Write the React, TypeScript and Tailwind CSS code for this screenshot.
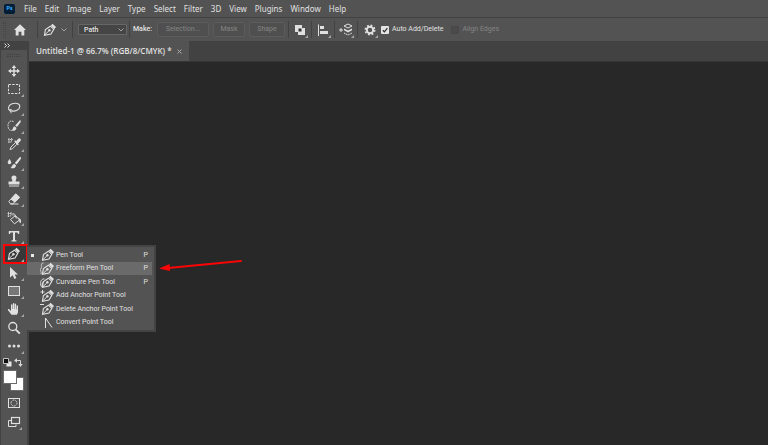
import React, { useState } from 'react';

type IconProps = { className?: string };

const menus = ['File', 'Edit', 'Image', 'Layer', 'Type', 'Select', 'Filter', '3D', 'View', 'Plugins', 'Window', 'Help'];

const Svg = ({ children, className = 'w-4 h-4' }: { children: React.ReactNode; className?: string }) => (
  <svg viewBox="0 0 16 16" fill="none" stroke="currentColor" strokeWidth="1" className={`shrink-0 ${className}`} aria-hidden="true">
    {children}
  </svg>
);

const nib = (
  <>
    <path d="M2.5 13.2 3.4 7.6 8.4 4.2 11.8 7.4 9 12Z" strokeWidth="1.1" />
    <path d="M2.7 13 6.6 9.1" />
    <circle cx="7.4" cy="8.3" r="1.2" fill="currentColor" stroke="none" />
    <path d="M8.8 3.4 10.6 1.8 14 5.1 12.4 7Z" fill="currentColor" stroke="none" />
  </>
);

const PenIcon = ({ className }: IconProps) => <Svg className={className}>{nib}</Svg>;

const FreeformIcon = () => (
  <Svg>
    {nib}
    <path d="M3.5 2C1 2 1.500 4 1.500 5.500S0 8 .5 9.500s1.200 2 .3 3.500" strokeWidth=".8" />
  </Svg>
);

const CurvatureIcon = () => (
  <Svg>
    {nib}
    <path d="M4.5 5C1.8 4.5.5 7 .6 9.5S1.5 13 2.5 13.2M3.5 7.5C2 8.5 2 11 2.6 13" />
  </Svg>
);

const AddPointIcon = () => (
  <Svg>
    {nib}
    <path d="M2.5 2v4M.5 4h4" />
  </Svg>
);

const DeletePointIcon = () => (
  <Svg>
    {nib}
    <path d="M0 3.5h4" />
  </Svg>
);

const ConvertIcon = () => (
  <Svg>
    <path d="M5.5 13V3L12 12.5" />
  </Svg>
);

const MoveIcon = () => (
  <Svg>
    <path d="M8 4v8M4 8h8" strokeWidth="1.4" />
    <path d="M8 2 10.3 5H5.7ZM8 14l2.3-3H5.7ZM2 8l3-2.3v4.6ZM14 8l-3-2.3v4.6Z" fill="currentColor" stroke="none" />
  </Svg>
);

const MarqueeIcon = () => (
  <Svg>
    <rect x="2.5" y="3.5" width="11" height="9" strokeDasharray="2.4 1.3" />
  </Svg>
);

const LassoIcon = () => (
  <Svg>
    <path d="M4.3 10.8C1.5 9.5 2 5.5 5.5 4 9.5 2.3 14 3.5 13.8 6.6 13.5 10 9.5 11.7 5.5 11" strokeWidth="1.1" />
    <path d="M4.2 9.5c1.5-.5 2.4 1 1.2 1.8s-2.500-.8-1.200-1.800c-.3 1.500 1.300 2.200.8 3.800" />
  </Svg>
);

const QuickSelectIcon = () => (
  <Svg>
    <path d="M7.5 3.5C4 1.800 1.800 4.500 2 8s2 4.800 4 4.300" strokeDasharray="1.6 .9" />
    <path d="M14.500 2.500c.6.500.3 1.300-.5 2.400l-3 4-1.800-1.500 3.600-4c.7-.8 1.200-1.300 1.700-.9ZM8.500 8.300l2 1.700c-.2 2.200-2.200 3-5 2.800 1.500-1 1-3.500 3-4.500Z" fill="currentColor" stroke="none" />
  </Svg>
);

const EyedropperIcon = () => (
  <Svg>
    <path d="M2 3.5h5M2 6h4M3 2v5M5.5 2v4" strokeWidth=".8" strokeDasharray="1.5 .5" />
    <path d="m4 13.500.8-2.300L9.500 6.500l1.600 1.600-4.700 4.700Z" />
    <path d="m8.200 5.300 1-1 1 .9 1.800-2.200c.8-.9 2-.8 2.600 0 .5.8.3 1.700-.5 2.400L12 7.200l.9 1-1 1Z" fill="currentColor" stroke="none" />
  </Svg>
);

const BrushIcon = () => (
  <Svg>
    <path d="M14.800 2.300c.6.500.3 1.300-.4 2.300L10.600 9.500 8.800 8l4.200-5c.7-.8 1.200-1.100 1.800-.7ZM8.200 8.800l1.900 1.600c-.4 2.500-2.700 3.200-5.600 2.600 1.700-.8 1.400-3.400 3.700-4.200ZM3.500 4c1 1.700 1.800 2.400 1.800 3.500a1.800 1.800 0 0 1-3.600 0C1.700 6.400 2.500 5.700 3.500 4Z" fill="currentColor" stroke="none" />
  </Svg>
);

const StampIcon = () => (
  <Svg>
    <path d="M8 2.500c2 0 3 1.500 2.400 3C9.800 6.800 9.600 7.500 9.800 8.500h3.700v3h-11v-3h3.700c.2-1 0-1.700-.6-3C5 4 6 2.500 8 2.500ZM3 12.500h10v1H3Z" fill="currentColor" stroke="none" />
  </Svg>
);

const EraserIcon = () => (
  <Svg>
    <path d="M2.8 10.5 5 8l3.500 3-1.500 1.800H4.500Z" />
    <path d="m5.3 7.5 4.400-4.700 4 3.500-4.500 4.700Z" fill="currentColor" />
    <path d="M4.500 13h8" />
  </Svg>
);

const BucketIcon = () => (
  <Svg>
    <path d="M1.5 3.5h5M1.5 6h4M2.5 2v5M5 2v4" strokeWidth=".8" strokeDasharray="1.5 .5" />
    <path d="M4.5 9.5 9.5 5.5l4 4.500-5 3.800ZM7 5.500c-.5-2 1-2.500 1.700-1l1.700 4" />
    <path d="m12 7.300 2.500 2c.8 1.500.8 3-.1 4-1-.8-1.200-2-1.200-3.300Z" fill="currentColor" stroke="none" />
  </Svg>
);

const TypeIcon = () => (
  <Svg>
    <path d="M2.800 3h10.400v3h-1.200c-.1-1-.5-1.500-1.500-1.500H9v7c0 .6.300.8 1.500.9V13.400h-5v-1c1.200-.1 1.500-.3 1.500-.9v-7H5.500C4.500 4.500 4.100 5 4 6H2.800Z" fill="currentColor" stroke="none" />
  </Svg>
);

const SelectionIcon = () => (
  <Svg>
    <path d="M4 2v10.500l2.700-2.300 1.700 3.800 2-.9-1.700-3.700H12Z" fill="currentColor" stroke="none" />
  </Svg>
);

const RectangleIcon = () => (
  <Svg>
    <rect x="2.5" y="3.5" width="11" height="9" fill="#777777" />
  </Svg>
);

const HandIcon = () => (
  <Svg>
    <path d="M5.500 13.800 2 9.200c-.5-.9.5-1.600 1.300-.9L5 10V4c0-1 1.400-1 1.400 0v4h.4V2.800c0-1 1.500-1 1.500 0V8h.4V3.200c0-1 1.400-1 1.400 0v5h.5V5c0-1 1.400-1 1.400 0v5c0 1.800-.5 2.700-1.200 3.800Z" fill="currentColor" stroke="none" />
  </Svg>
);

const ZoomIcon = () => (
  <Svg>
    <circle cx="6.8" cy="6.5" r="4" strokeWidth="1.3" />
    <path d="m9.800 9.600 4 4" strokeWidth="1.9" />
  </Svg>
);

const MoreIcon = () => (
  <Svg>
    <g fill="currentColor" stroke="none">
      <circle cx="3.5" cy="8" r="1.5" />
      <circle cx="8" cy="8" r="1.5" />
      <circle cx="12.5" cy="8" r="1.5" />
    </g>
  </Svg>
);

const tools = [
  { name: 'Move Tool', Icon: MoveIcon, corner: false },
  { name: 'Rectangular Marquee Tool', Icon: MarqueeIcon, corner: true },
  { name: 'Lasso Tool', Icon: LassoIcon, corner: true },
  { name: 'Quick Selection Tool', Icon: QuickSelectIcon, corner: true },
  { name: 'Eyedropper Tool', Icon: EyedropperIcon, corner: true },
  { name: 'Brush Tool', Icon: BrushIcon, corner: true },
  { name: 'Clone Stamp Tool', Icon: StampIcon, corner: true },
  { name: 'Eraser Tool', Icon: EraserIcon, corner: true },
  { name: 'Paint Bucket Tool', Icon: BucketIcon, corner: true },
  { name: 'Type Tool', Icon: TypeIcon, corner: true },
  { name: 'Pen Tool', Icon: PenIcon, corner: true },
  { name: 'Path Selection Tool', Icon: SelectionIcon, corner: true },
  { name: 'Rectangle Tool', Icon: RectangleIcon, corner: true },
  { name: 'Hand Tool', Icon: HandIcon, corner: true },
  { name: 'Zoom Tool', Icon: ZoomIcon, corner: false },
  { name: 'Edit Toolbar', Icon: MoreIcon, corner: true },
];

const penTools = [
  { name: 'Pen Tool', key: 'P', Icon: PenIcon },
  { name: 'Freeform Pen Tool', key: 'P', Icon: FreeformIcon },
  { name: 'Curvature Pen Tool', key: 'P', Icon: CurvatureIcon },
  { name: 'Add Anchor Point Tool', key: '', Icon: AddPointIcon },
  { name: 'Delete Anchor Point Tool', key: '', Icon: DeletePointIcon },
  { name: 'Convert Point Tool', key: '', Icon: ConvertIcon },
];

const Corner = () => (
  <svg viewBox="0 0 3 3" className="absolute right-0 bottom-0 w-[3px] h-[3px] fill-[#a5a5a5]" aria-hidden="true">
    <path d="M3 0v3H0Z" />
  </svg>
);

const Divider = () => <span className="w-px self-stretch my-[3px] bg-[#424242]" />;

const Chevron = ({ className }: IconProps) => (
  <svg viewBox="0 0 6 4" className={`w-[6px] h-1 ${className ?? ''}`} fill="none" stroke="#a0a0a0" aria-hidden="true">
    <path d="m.5.5 2.5 2.5L5.5.5" />
  </svg>
);

const CheckOption = ({ label, disabled = false }: { label: string; disabled?: boolean }) => {
  const [checked, setChecked] = useState(!disabled);
  return (
    <label className={`flex items-center gap-[3px] ${disabled ? 'text-[#858585]' : 'text-[#e2e2e2]'}`}>
      <span className="grid">
        <input
          type="checkbox"
          checked={checked}
          disabled={disabled}
          onChange={(e) => setChecked(e.target.checked)}
          className="appearance-none col-start-1 row-start-1 w-2 h-2 rounded-[1px] bg-[#e4e4e4] disabled:bg-[#4b4b4b] disabled:border disabled:border-[#474747]"
        />
        {checked && (
          <svg viewBox="0 0 8 8" className="col-start-1 row-start-1 w-2 h-2 pointer-events-none" fill="none" stroke="#333333" strokeWidth="1.3" aria-hidden="true">
            <path d="M1.800 4.200 3.400 5.800 6.400 2.200" />
          </svg>
        )}
      </span>
      {label}
    </label>
  );
};

const disabledButton = 'h-[15px] rounded-[2px] border border-[#5c5c5c] bg-[#4f4f4f] text-[#858585]';

const OptionsBar = () => (
  <div className="flex items-center h-6 pl-[3px] border-t border-[#424242] font-[Roboto,sans-serif] text-[7px] whitespace-nowrap">
    <span className="w-[3px] h-4 border-x border-dotted border-[#454545]" />
    <button aria-label="Home" className="ml-[6px] w-4 h-4">
      <Svg>
        <path d="M8 2.200 14 8h-1.700v5.500H9.400V9.700H6.600v3.800H3.700V8H2Z" fill="currentColor" stroke="none" />
      </Svg>
    </button>
    <span className="flex self-stretch ml-[9px]"><Divider /></span>
    <button aria-label="Tool presets" className="flex items-center gap-[3px] ml-1 mr-[5px]">
      <PenIcon />
      <Chevron />
    </button>
    <Divider />
    <div className="relative ml-[5px] mr-[2px]">
      <select
        aria-label="Tool mode"
        className="block appearance-none w-[49px] h-[11px] pl-[5px] leading-[8px] text-[7px] font-medium rounded-[1px] border border-[#666666] bg-[#454545] text-[#e2e2e2]"
      >
        <option>Path</option>
        <option>Shape</option>
        <option>Pixels</option>
      </select>
      <Chevron className="absolute right-[3px] top-1 pointer-events-none" />
    </div>
    <Divider />
    <span className="ml-[3px] w-6 font-medium">Make:</span>
    <div className="flex gap-1 mr-[3px]">
      <button disabled className={`${disabledButton} w-[52px]`}>Selection...</button>
      <button disabled className={`${disabledButton} w-8`}>Mask</button>
      <button disabled className={`${disabledButton} w-9`}>Shape</button>
    </div>
    <Divider />
    <button aria-label="Path operations" className="relative mx-[3px]">
      <Svg>
        <path d="M3 3h7v3h3v7H6v-3H3Z" fill="currentColor" stroke="none" />
        <path d="M6.500 6.500h3v3h-3Z" fill="#333333" stroke="none" />
      </Svg>
      <Corner />
    </button>
    <Divider />
    <button aria-label="Path alignment" className="relative mx-[3px]">
      <Svg>
        <path d="M3.500 2.500v11.500" />
        <path d="M5 4h4v3H5ZM5 9h8v3H5Z" fill="currentColor" stroke="none" />
      </Svg>
      <Corner />
    </button>
    <Divider />
    <button aria-label="Path arrangement" className="relative mx-[3px]">
      <Svg>
        <path d="M3 6v4M1 8h4" />
        <path d="m10 2 4 2-4 2-4-2Z" />
        <path d="m6 6.500 4 2 4-2v1.800l-4 2.200-4-2.200Z" fill="currentColor" stroke="none" />
        <path d="m6 11 4 2 4-2" strokeDasharray="1.5 .5" />
      </Svg>
      <Corner />
    </button>
    <Divider />
    <button aria-label="Path options" className="relative ml-1 mr-[3px]">
      <Svg>
        <circle cx="8" cy="8" r="3.2" strokeWidth="2" />
        <circle cx="8" cy="8" r="4.7" strokeWidth="1.6" strokeDasharray="1.85 1.84" />
      </Svg>
      <Corner />
    </button>
    <div className="flex gap-2">
      <CheckOption label="Auto Add/Delete" />
      <CheckOption label="Align Edges" disabled />
    </div>
  </div>
);

const PenFlyout = () => (
  <ul role="menu" className="absolute left-full top-0 z-10 grid grid-rows-6 w-[129px] h-[87px] py-px pr-[2px] border-2 border-l-0 border-[#434343] bg-[#535353] font-[Roboto,sans-serif] text-[7px] whitespace-nowrap">
    {penTools.map(({ name, key, Icon }, i) => (
      <li key={name} role="none" className={i === 1 ? 'bg-[#6a6a6a]' : ''}>
        <button role="menuitem" className="flex items-center w-full h-full pl-1 pr-1">
          <span className={`w-[3px] h-[3px] mr-[6px] ${i === 0 ? 'bg-[#e8e8e8]' : ''}`} />
          <span className="w-4 h-[13px] flex items-center"><Icon /></span>
          <span className="flex-1 text-left">{name}</span>
          <span>{key}</span>
        </button>
      </li>
    ))}
  </ul>
);

const Toolbar = () => (
  <aside className="flex flex-col shrink-0 w-[29px] border-l border-r-2 border-[#424242] bg-[#535353]">
    <button aria-label="Expand panel" className="flex items-center h-[9px] pl-[3px] bg-[#424242]">
      <svg viewBox="0 0 6 5" className="w-[6px] h-[5px]" fill="none" stroke="#d8d8d8" aria-hidden="true">
        <path d="M.5.5 2.5 2.5.5 4.5M3.5.5l2 2-2 2" />
      </svg>
    </button>
    <span className="mx-auto mt-1 w-[14px] h-[3px] border-y border-dotted border-[#404040]" />
    <div className="flex flex-col justify-between mt-[5px] h-[293px]">
      {tools.map(({ name, Icon, corner }) => {
        const active = name === 'Pen Tool';
        return (
          <div key={name} className="relative flex pl-[3px]">
            <button
              aria-label={name}
              className={`relative flex items-center justify-center w-[23px] h-[18px] pr-[3px] ${
                active ? 'bg-[#383838] outline-2 -outline-offset-1 outline-[#fa0505]' : ''
              }`}
            >
              <Icon className="w-4 h-4" />
              {corner && <span className="absolute right-[3px] bottom-px w-[3px] h-[3px]"><Corner /></span>}
            </button>
            {active && <PenFlyout />}
          </div>
        );
      })}
    </div>
    <div className="flex justify-between mt-[3px] pl-[2px] pr-1">
      <button aria-label="Default colors">
        <svg viewBox="0 0 9 9" className="w-[9px] h-[9px]" aria-hidden="true">
          <path d="M3.5 3.5h5v5h-5Z" fill="#e8e8e8" />
          <path d="M.5.5h5v5h-5Z" fill="#111111" stroke="#c0c0c0" />
        </svg>
      </button>
      <button aria-label="Swap colors">
        <svg viewBox="0 0 9 9" className="w-[9px] h-[9px]" fill="none" stroke="#d8d8d8" aria-hidden="true">
          <path d="M2 2.500h4.500V7" />
          <path d="M0 2.500 3 .3v4.400ZM6.500 9l2.200-3H4.300Z" fill="#d8d8d8" stroke="none" />
        </svg>
      </button>
    </div>
    <div className="grid grid-cols-3 grid-rows-3 ml-[2px] mt-[3px] w-[21px] h-[21px]">
      <button aria-label="Background color" className="col-start-2 col-span-2 row-start-2 row-span-2 bg-white border border-[#6b6b6b]" />
      <button aria-label="Foreground color" className="col-start-1 col-span-2 row-start-1 row-span-2 bg-white border border-[#6b6b6b]" />
    </div>
    <button aria-label="Quick mask mode" className="mt-1 ml-[5px] w-4 h-4">
      <Svg>
        <rect x="2.5" y="3.5" width="11" height="9" />
        <circle cx="8" cy="8" r="3" strokeDasharray="1.2 .6" />
      </Svg>
    </button>
    <button aria-label="Screen mode" className="relative mt-[3px] ml-[5px] w-4 h-4">
      <Svg>
        <path d="M5 6.500H2.500v6h7.500V10.500" />
        <rect x="5.5" y="3.5" width="8" height="6" strokeWidth="1.2" />
      </Svg>
      <Corner />
    </button>
  </aside>
);

export default function App() {
  return (
    <div className="flex flex-col min-h-screen bg-[#282828] text-[#e0e0e0] font-['Noto_Sans',sans-serif]">
      <header className="bg-[#535353]">
        <nav className="flex items-center h-[17px] pl-1 text-[8px]">
          <span className="flex items-center justify-center w-[11px] h-[10px] mr-[9px] rounded-[2px] bg-[#001e36] text-[#31a8ff] text-[6px] font-bold">
            Ps
          </span>
          <div className="flex gap-2">
            {menus.map((menu) => (
              <button key={menu}>{menu}</button>
            ))}
          </div>
        </nav>
        <OptionsBar />
      </header>

      <div className="flex flex-1">
        <Toolbar />
        <main className="flex flex-col flex-1">
          {/* Document tabs */}
          <div className="flex h-[21px] border-b border-[#363636] bg-[#424242]">
            <div className="flex items-center gap-[5px] px-[7px] bg-[#535353] font-['Open_Sans',sans-serif] text-[8px] font-semibold whitespace-nowrap">
              <span>Untitled-1 @ 66.7% (RGB/8/CMYK) *</span>
              <button aria-label="Close document">
                <svg viewBox="0 0 5 5" className="w-[5px] h-[5px]" stroke="#a8a8a8" aria-hidden="true">
                  <path d="m.5.5 4 4m0-4-4 4" />
                </svg>
              </button>
            </div>
          </div>

          {/* Canvas */}
          <div className="relative flex-1 bg-[#282828]">
            <svg viewBox="0 0 84 12" className="absolute left-[130px] top-[197px] w-[84px] h-3" aria-hidden="true">
              <path d="M82 2 9 9" stroke="#fa0505" strokeWidth="2" strokeLinecap="round" />
              <path d="m0 9.500 10.500-4.500.5 7Z" fill="#fa0505" />
            </svg>
          </div>
        </main>
      </div>
    </div>
  );
}
